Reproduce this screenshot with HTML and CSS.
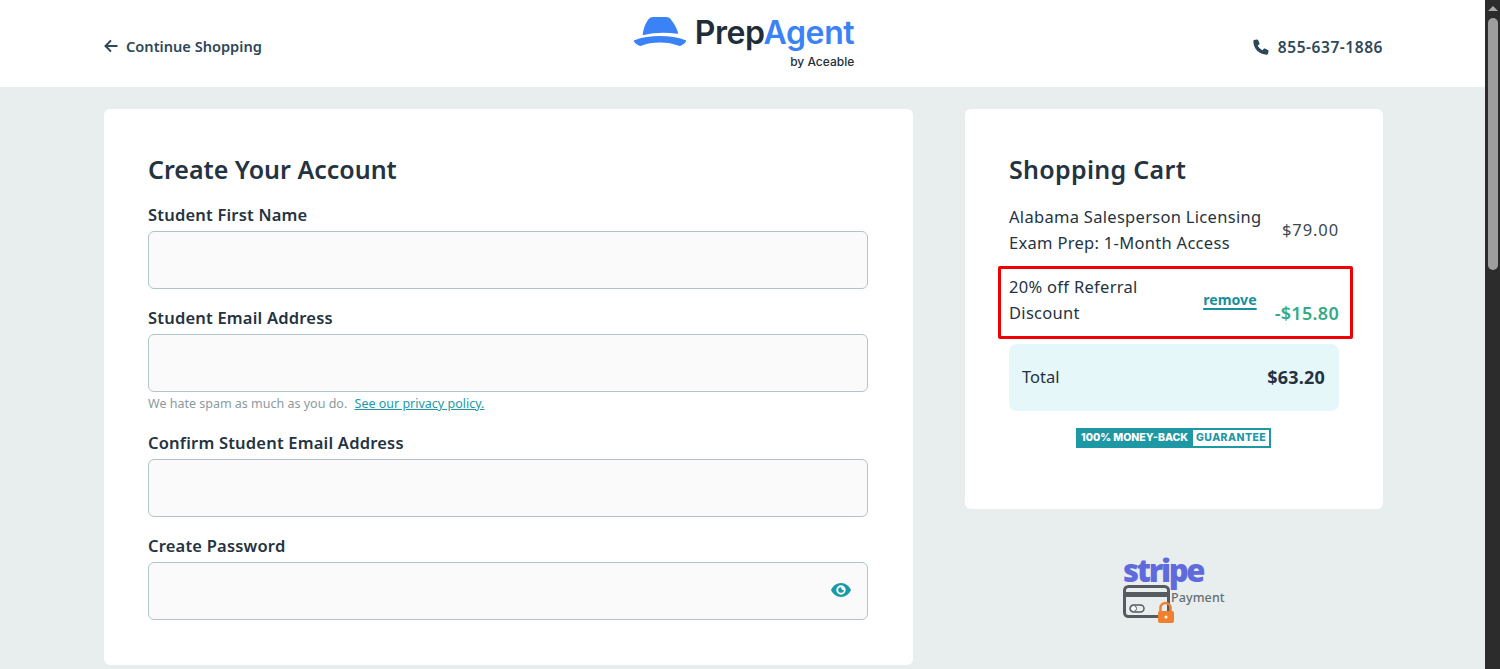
FILE: index.html
```html
<!DOCTYPE html>
<html lang="en">

<head>
    <meta charset="UTF-8">
    <meta name="viewport" content="width=device-width, initial-scale=1.0">
    <title>PrepAgent Checkout</title>
    <link rel="stylesheet" href="styles.css">
</head>

<body>
    <div class="page">
        <header class="site-header">
            <a class="back-link" href="#">
                <svg class="back-icon" viewBox="0 0 14 14" width="14" height="14" aria-hidden="true">
                    <path d="M13.500 7H2M7 1.400 1.500 7 7 12.600" fill="none" stroke="#2f4858" stroke-width="2" />
                </svg>
                Continue Shopping
            </a>
            <a class="logo" href="#">
                <svg class="logo-hat" viewBox="0 0 54 31" width="54" height="31" aria-hidden="true">
                    <path d="M9.700 17.500C10.500 11 13 5 16 1.800C17 .7 18 .2 20 .1H33C35 .2 36.500 .8 37.500 2C41 6 43.500 11 45 15.500C45.300 16.500 44.800 17 44 16.800C33 15 22 15.300 11 17.900C10.200 18 9.600 18 9.700 17.500Z" fill="#3b82f6" />
                    <path d="M.8 23.500C9 20 18 19 27 19C36 19 45 20 53.200 23.500C53.800 24.500 49 29 46.500 29C40 26.500 34 25.500 27 25.500C20 25.500 13 26.500 7.500 29C5 29 .2 24.500 .8 23.500Z" fill="#3b82f6" />
                </svg>
                <span class="logo-text">
                    <span class="logo-name">Prep<span class="logo-accent">Agent</span></span>
                    <span class="logo-by">by Aceable</span>
                </span>
            </a>
            <a class="phone-link" href="#">
                <svg class="phone-icon" viewBox="0 0 16 16" width="16" height="16" aria-hidden="true">
                    <path d="M3.700.4 1.200 1C.6 1.200.3 1.700.3 2.300.5 9.900 6.100 15.500 13.700 15.700c.6 0 1.100-.3 1.300-.9l.6-2.500c.1-.6-.1-1.100-.7-1.400L12 9.600c-.5-.2-1.100-.1-1.400.3L9.400 11.300C7.400 10.300 5.700 8.600 4.700 6.600L6.100 5.400c.4-.3.5-.9.3-1.400L5.100 1.100C4.800.6 4.300.3 3.700.4Z" fill="#2f4858" />
                </svg>
                855-637-1886
            </a>
        </header>

        <main class="checkout">
            <section class="card account-card">
                <h2 class="card-title">Create Your Account</h2>
                <form class="account-form">
                    <div class="field">
                        <label class="field-label" for="first-name">Student First Name</label>
                        <input class="field-input" type="text" id="first-name">
                    </div>
                    <div class="field">
                        <label class="field-label" for="email">Student Email Address</label>
                        <input class="field-input" type="text" id="email">
                        <p class="field-help">We hate spam as much as you do. <a href="#">See our privacy policy.</a></p>
                    </div>
                    <div class="field">
                        <label class="field-label" for="confirm-email">Confirm Student Email Address</label>
                        <input class="field-input" type="text" id="confirm-email">
                    </div>
                    <div class="field">
                        <label class="field-label" for="password">Create Password</label>
                        <div class="password-wrap">
                            <input class="field-input" type="password" id="password">
                            <svg class="eye-icon" viewBox="0 0 20 14" width="20" height="14" aria-hidden="true">
                                <path fill-rule="evenodd" d="M10 0C5.500 0 1.800 2.900 0 7c1.800 4.100 5.500 7 10 7s8.200-2.900 10-7c-1.800-4.100-5.500-7-10-7Zm0 2.300a4.700 4.700 0 1 1 0 9.400 4.700 4.700 0 0 1 0-9.400Zm0 1.900a2.800 2.800 0 1 0 2.800 2.800c-.9.400-2.500-.5-2.800-2.800Z" fill="#1a9aa8" />
                            </svg>
                        </div>
                    </div>
                </form>
            </section>

            <aside class="sidebar">
                <section class="card cart-card">
                    <h2 class="card-title">Shopping Cart</h2>
                    <div class="cart-row">
                        <span class="cart-name">Alabama Salesperson Licensing Exam Prep: 1-Month Access</span>
                        <span class="cart-price">$79.00</span>
                    </div>
                    <div class="cart-row discount-row">
                        <span class="discount-name">20% off Referral Discount</span>
                        <a class="remove-link" href="#">remove</a>
                        <span class="discount-price">-$15.80</span>
                    </div>
                    <div class="cart-total">
                        <span>Total</span>
                        <strong>$63.20</strong>
                    </div>
                    <div class="guarantee">
                        <span class="guarantee-left">100% MONEY-BACK</span>
                        <span class="guarantee-right">GUARANTEE</span>
                    </div>
                </section>

                <div class="stripe-badge">
                    <span class="stripe-name">stripe</span>
                    <div class="stripe-bottom">
                        <svg class="stripe-card" viewBox="0 0 56 42" width="56" height="42" aria-hidden="true">
                            <rect x="1.500" y="1.500" width="44" height="30" rx="4" fill="none" stroke="#555c5f" stroke-width="3" />
                            <rect x="2" y="7" width="43" height="5" fill="#555c5f" />
                            <rect x="7" y="20" width="14" height="7" rx="3.500" fill="none" stroke="#555c5f" stroke-width="1.500" />
                            <circle cx="10.500" cy="23.500" r="3" fill="#fff" stroke="#555c5f" />
                            <path d="M37.500 27v-4a5 5 0 0 1 10 0v4" fill="none" stroke="#f07f2e" stroke-width="2.500" />
                            <rect x="35" y="26" width="16" height="12" rx="2" fill="#f07f2e" />
                            <circle cx="43" cy="32" r="1.500" fill="#fff" />
                        </svg>
                        <span class="stripe-payment">Payment</span>
                    </div>
                </div>
            </aside>
        </main>
    </div>

    <div class="scrollbar">
        <span class="scroll-arrow"></span>
        <span class="scroll-thumb"></span>
    </div>
</body>

</html>
```

FILE: styles.css
```css
* {
    box-sizing: border-box;
}

html,
body {
    height: 669px;
    margin: 0;
    overflow: hidden;
}

body {
    display: flex;
    font-family: 'Noto Sans', 'Open Sans', sans-serif;
    background-color: #e8eeee;
    color: #253341;
}

a {
    text-decoration: none;
}

.page {
    flex: 1;
    min-width: 0;
}

/* Header */
.site-header {
    display: grid;
    grid-template-columns: 1fr auto 1fr;
    align-items: center;
    height: 87px;
    padding: 0 102px 0 104px;
    background-color: #ffffff;
}

.back-link,
.phone-link {
    display: flex;
    align-items: center;
    padding-top: 4px;
    color: #2f4858;
    font-weight: 600;
    font-size: 14.600px;
}

.back-link {
    gap: 8px;
}

.phone-link {
    justify-self: end;
    gap: 9px;
    padding-top: 6px;
    font-size: 15.500px;
    letter-spacing: 0.55px;
}

.logo {
    display: flex;
    align-items: flex-start;
    gap: 8px;
    margin-top: -4px;
}

.logo-hat {
    margin-top: 3px;
}

.logo-text {
    display: flex;
    flex-direction: column;
    align-items: flex-end;
}

.logo-name {
    font-family: 'Inter', sans-serif;
    font-weight: 600;
    font-size: 32px;
    line-height: 38px;
    letter-spacing: -0.4px;
    color: #1f2d3a;
}

.logo-accent {
    color: #3b82f6;
}

.logo-by {
    margin-top: 3px;
    font-family: 'Inter', sans-serif;
    font-weight: 500;
    font-size: 12px;
    line-height: 14px;
    color: #1f2d3a;
}

/* Main layout */
.checkout {
    display: flex;
    gap: 52px;
    padding: 22px 102px 0 104px;
}

.card {
    background-color: #ffffff;
    border-radius: 6px;
    padding: 44px;
}

.card-title {
    margin: -1px 0 0;
    font-size: 25px;
    line-height: 34px;
    font-weight: 600;
    color: #253341;
}

.cart-card .card-title {
    letter-spacing: 0.3px;
}

.account-card {
    width: 809px;
    height: 556px;
    padding: 44px 45px 0 44px;
}

.sidebar {
    flex: 1;
}

/* Form */
.account-form {
    margin-top: 17px;
}

.field {
    margin-bottom: 17px;
}

.field-label {
    display: block;
    margin-bottom: 5px;
    font-size: 16.500px;
    line-height: 23px;
    font-weight: 600;
    letter-spacing: 0.2px;
    color: #253341;
}

.field-input {
    display: block;
    width: 100%;
    height: 58px;
    background-color: #fafafa;
    border: 1px solid #b3c4c8;
    border-radius: 6px;
}

.field-help {
    margin: 3px 0 19px;
    font-size: 12.500px;
    line-height: 17px;
    color: #8c9a9f;
}

.field-help a {
    margin-left: 4px;
    color: #1a9aa8;
    text-decoration: underline;
}

.password-wrap {
    position: relative;
}

.eye-icon {
    position: absolute;
    right: 17px;
    top: 21px;
}

/* Cart */
.cart-card {
    height: 400px;
    padding: 44px 44px 0;
}

.cart-row {
    display: flex;
    align-items: center;
    justify-content: space-between;
    font-size: 16.500px;
    line-height: 26px;
    letter-spacing: 0.3px;
    color: #253341;
}

.cart-row:first-of-type {
    margin-top: 18px;
}

.cart-name {
    width: 260px;
}

.cart-price {
    letter-spacing: 0.9px;
    color: #3a4852;
}

.discount-row {
    position: relative;
    align-items: flex-end;
    margin-top: 18px;
}

/* red callout drawn on the screenshot */
.discount-row::after {
    content: "";
    position: absolute;
    left: -11px;
    right: -14px;
    top: -8px;
    bottom: -13px;
    border: 3px solid #f00000;
    border-radius: 2px;
}

.discount-name {
    width: 165px;
}

.remove-link {
    align-self: center;
    margin-left: auto;
    margin-right: 18px;
    margin-top: -1px;
    color: #1a8f9c;
    font-size: 14.200px;
    font-weight: 700;
    line-height: 19px;
    letter-spacing: 0;
    text-decoration: underline;
    text-decoration-thickness: 2px;
    text-underline-offset: 3px;
}

.discount-price {
    font-size: 18px;
    letter-spacing: 0.3px;
    color: #34ab85;
    font-weight: 600;
    white-space: nowrap;
}

.cart-total {
    display: flex;
    align-items: center;
    justify-content: space-between;
    height: 67px;
    margin-top: 18px;
    padding: 0 14px 2px 13px;
    background-color: #e5f7f8;
    border-radius: 8px;
    font-size: 16.500px;
}

.cart-total strong {
    font-size: 18px;
    letter-spacing: 0.2px;
    font-weight: 700;
}

.guarantee {
    display: flex;
    width: 195px;
    height: 20px;
    margin: 17px 0 0 67px;
    border: 2px solid #1f98a6;
    font-family: 'Inter', sans-serif;
    font-weight: 800;
    font-size: 10.500px;
    line-height: 16px;
    white-space: nowrap;
}

.guarantee-left {
    flex: 1;
    padding-left: 3px;
    background-color: #1f98a6;
    color: #ffffff;
}

.guarantee-right {
    padding: 0 3px;
    letter-spacing: 0.4px;
    background-color: #ffffff;
    color: #1f98a6;
}

/* Stripe badge */
.stripe-badge {
    display: flex;
    flex-direction: column;
    width: 104px;
    margin: 44px 0 0 158px;
}

.stripe-name {
    font-family: 'Open Sans', sans-serif;
    font-weight: 800;
    font-size: 31px;
    line-height: 34px;
    letter-spacing: -2.300px;
    color: #5f6bdc;
}

.stripe-bottom {
    display: flex;
    align-items: flex-start;
    margin-top: -2px;
}

.stripe-payment {
    margin: 4px 0 0 -8px;
    font-size: 12.500px;
    font-weight: 500;
    letter-spacing: 0.1px;
    color: #666f73;
}

/* Window scrollbar */
.scrollbar {
    display: flex;
    flex-direction: column;
    align-items: center;
    width: 15px;
    background-color: #2c2c2c;
}

.scroll-arrow {
    width: 0;
    height: 0;
    margin-top: 6px;
    border-left: 5px solid transparent;
    border-right: 5px solid transparent;
    border-bottom: 5px solid #a8a8a8;
}

.scroll-thumb {
    width: 10px;
    height: 252px;
    margin-top: 7px;
    background-color: #9e9e9e;
    border-radius: 5px;
}
```
